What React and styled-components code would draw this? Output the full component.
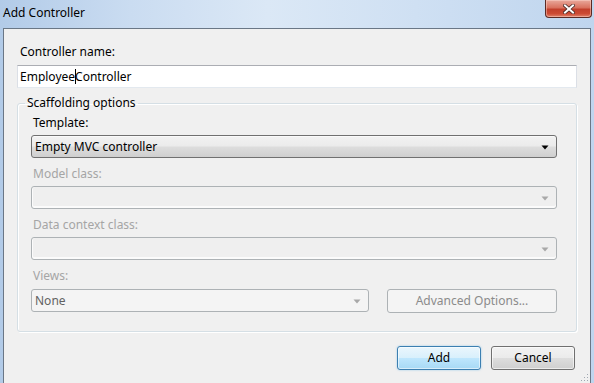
import React from 'react'
import styled, { createGlobalStyle } from 'styled-components'

const GlobalStyle = createGlobalStyle`
  html, body {
    margin: 0;
    padding: 0;
  }
  body {
    background: #cddff3;
    font-family: "Segoe UI", "Noto Sans", "Liberation Sans", sans-serif;
    font-size: 12px;
    color: #000;
  }
`

const Window = styled.div`
  width: 594px;
  height: 383px;
  display: flex;
  flex-direction: column;
  overflow: hidden;
  background: linear-gradient(90deg, #b2cbe8 0%, #cadcf1 22%, #dbe8f6 45%, #cfe0f3 70%, #bfd5ee 100%);
`

const TitleBar = styled.div`
  height: 28px;
  flex: none;
  display: flex;
  justify-content: space-between;
  align-items: flex-start;
  padding-left: 3px;
`

const Title = styled.div`
  padding-top: 5px;
  line-height: 16px;
  font-size: 12px;
  color: #000;
`

const CloseButton = styled.div`
  width: 45px;
  height: 17px;
  margin-right: 2px;
  display: flex;
  align-items: center;
  justify-content: center;
  border: 1px solid #5b2a24;
  border-top: none;
  border-radius: 0 0 4px 4px;
  background: linear-gradient(180deg, #e9a99c 0%, #d9725f 45%, #c2402c 55%, #cc4a33 80%, #e0826a 100%);
  box-shadow: inset 0 0 0 1px rgba(255, 220, 210, 0.45);
`

const Client = styled.div`
  flex: 1;
  margin: 0 3px;
  border: 1px solid #6a7786;
  border-bottom: none;
  background: #f0f0f0;
  padding: 15px 13px 0 13px;
  position: relative;
`

const Label = styled.div`
  line-height: 16px;
  padding-left: ${p => p.$inset || 3}px;
  color: ${p => (p.$disabled ? '#a5a5a5' : '#000')};
  margin-bottom: ${p => p.$gap ?? 4}px;
`

const TextBox = styled.div`
  height: 23px;
  box-sizing: border-box;
  border: 1px solid #abadb3;
  border-left-color: #dbdfe6;
  border-right-color: #dbdfe6;
  border-bottom-color: #e3e9ef;
  background: #fff;
  display: flex;
  align-items: center;
  padding-left: 2px;
  line-height: 16px;
`

const Caret = styled.span`
  display: inline-block;
  width: 1px;
  height: 15px;
  background: #000;
  vertical-align: middle;
  margin: 0 -1px 0 0;
`

const GroupBox = styled.fieldset`
  margin: 7px 0 0 0;
  padding: 4px 19px 18px 13px;
  border: 1px solid #d5dfe5;
  border-radius: 3px;
  box-shadow: inset 1px 1px 0 #fff, 1px 1px 0 #fff;
  display: flex;
  flex-direction: column;
`

const Legend = styled.legend`
  padding: 0 2px;
  margin-left: -6px;
  line-height: 16px;
`

const Field = styled.div`
  display: flex;
  flex-direction: column;
  margin-top: ${p => p.$top || 0}px;
`

const Combo = styled.div`
  height: 23px;
  box-sizing: border-box;
  border: 1px solid ${p => (p.$disabled ? '#adb2b5' : '#707070')};
  border-radius: 3px;
  display: flex;
  align-items: center;
  justify-content: space-between;
  padding: 0 3px 0 3px;
  line-height: 16px;
  color: ${p => (p.$disabled ? '#626262' : '#000')};
  background: ${p =>
    p.$variant === 'list'
      ? 'linear-gradient(180deg, #f2f2f2 0%, #ebebeb 48%, #dddddd 52%, #cfcfcf 100%)'
      : p.$variant === 'editable'
      ? '#efefef'
      : '#f4f4f4'};
  box-shadow: ${p =>
    p.$variant === 'editable'
      ? 'inset 0 -2px 0 #fbfbfb, inset 1px 0 0 #fbfbfb'
      : p.$variant === 'list'
      ? 'inset 0 1px 0 #fafafa'
      : 'none'};
`

const Arrow = ({ color }) => (
  <svg width="16" height="10" viewBox="0 0 16 10">
    <path d="M4.5 3.5h7L8 7.5z" fill={color} />
  </svg>
)

const Row = styled.div`
  display: grid;
  grid-template-columns: 338px 1fr;
  column-gap: 18px;
  align-items: start;
`

const Button = styled.div`
  height: ${p => p.$h || 24}px;
  width: ${p => (p.$w ? `${p.$w}px` : 'auto')};
  box-sizing: border-box;
  border-radius: 3px;
  display: flex;
  align-items: center;
  justify-content: center;
  line-height: 16px;
  border: 1px solid ${p => (p.$disabled ? '#adb2b5' : p.$primary ? '#3c7fb1' : '#707070')};
  color: ${p => (p.$disabled ? '#8b8b8b' : '#000')};
  background: ${p =>
    p.$disabled
      ? '#f4f4f4'
      : p.$primary
      ? 'linear-gradient(180deg, #eaf6fd 0%, #d9f0fc 48%, #bee6fd 52%, #a7d9f5 100%)'
      : 'linear-gradient(180deg, #f2f2f2 0%, #ebebeb 48%, #dddddd 52%, #cfcfcf 100%)'};
  box-shadow: ${p =>
    p.$primary
      ? 'inset 0 0 0 1px rgba(255,255,255,0.55), 0 0 2px rgba(80,170,230,0.6)'
      : p.$disabled
      ? 'none'
      : 'inset 0 0 0 1px rgba(255,255,255,0.6)'};
`

const Actions = styled.div`
  display: flex;
  justify-content: flex-end;
  gap: 10px;
  margin-top: 14px;
  padding-right: 2px;
`

const Grip = styled.svg`
  position: absolute;
  right: 1px;
  bottom: 1px;
`

export default function App() {
  return (
    <>
      <GlobalStyle />
      <Window>
        <TitleBar>
          <Title>Add Controller</Title>
          <CloseButton>
            <svg width="12" height="10" viewBox="0 0 12 10">
              <path d="M2 1.5l8 7M10 1.5l-8 7" stroke="#4a2a26" strokeWidth="3.6" strokeLinecap="square" />
              <path d="M2 1.5l8 7M10 1.5l-8 7" stroke="#fff" strokeWidth="2" strokeLinecap="square" />
            </svg>
          </CloseButton>
        </TitleBar>
        <Client>
          <Label $gap={5}>Controller name:</Label>
          <TextBox>
            Employee<Caret />Controller
          </TextBox>

          <GroupBox>
            <Legend>Scaffolding options</Legend>
            <Field>
              <Label $inset={2}>Template:</Label>
              <Combo $variant="list">
                <span>Empty MVC controller</span>
                <Arrow color="#000" />
              </Combo>
            </Field>
            <Field $top={8}>
              <Label $inset={2} $disabled>Model class:</Label>
              <Combo $variant="editable" $disabled>
                <span />
                <Arrow color="#a8a8a8" />
              </Combo>
            </Field>
            <Field $top={8}>
              <Label $inset={2} $disabled>Data context class:</Label>
              <Combo $variant="editable" $disabled>
                <span />
                <Arrow color="#a8a8a8" />
              </Combo>
            </Field>
            <Field $top={8}>
              <Label $inset={2} $disabled $gap={5}>Views:</Label>
              <Row>
                <Combo $disabled>
                  <span>None</span>
                  <Arrow color="#a8a8a8" />
                </Combo>
                <Button $disabled>Advanced Options...</Button>
              </Row>
            </Field>
          </GroupBox>

          <Actions>
            <Button $primary $w={84}>Add</Button>
            <Button $w={84}>Cancel</Button>
          </Actions>

          <Grip width="10" height="10" viewBox="0 0 10 10">
            {[[8, 2], [8, 5], [5, 5], [8, 8], [5, 8], [2, 8]].map(([x, y]) => (
              <rect key={`${x}-${y}`} x={x} y={y} width="1" height="1" fill="#a0a8b2" />
            ))}
          </Grip>
        </Client>
      </Window>
    </>
  )
}
